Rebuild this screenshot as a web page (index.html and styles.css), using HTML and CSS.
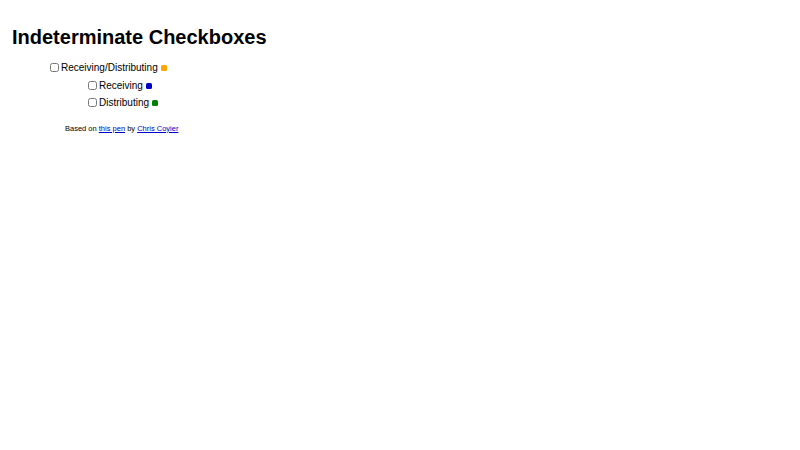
FILE: index.html
```html
<!DOCTYPE html>
<html>
<head>
<meta charset="utf-8">
<link rel="stylesheet" href="styles.css">
</head>
<body>
<h1 class="title">Indeterminate Checkboxes</h1>
<ul class="tree">
  <li>
    <input type="checkbox" id="all"><label for="all">Receiving/Distributing <span class="dot orange"></span></label>
    <ul class="tree sub">
      <li><input type="checkbox" id="rec"><label for="rec">Receiving <span class="dot blue"></span></label></li>
      <li><input type="checkbox" id="dis"><label for="dis">Distributing <span class="dot green"></span></label></li>
    </ul>
  </li>
</ul>
<p class="credit">Based on <a href="#">this pen</a> by <a href="#">Chris Coyier</a></p>
</body>
</html>
```
FILE: styles.css
```css
body {
  margin: 0;
  padding: 12px;
  font-family: "Liberation Sans", Arial, sans-serif;
  background: #fff;
  color: #000;
}
.title {
  font-size: 20px;
  line-height: 24px;
  font-weight: bold;
  margin: 13px 0 10px 0;
}
.tree {
  list-style: none;
  margin: 0;
  padding: 0 0 0 34px;
  font-size: 10px;
}
.tree li {
  line-height: 17.5px;
}
.sub {
  padding-left: 38px;
}
.tree input {
  width: 9px;
  height: 9px;
  margin: 0 2px 0 4px;
  vertical-align: -1px;
}
.dot {
  display: inline-block;
  width: 6px;
  height: 6px;
  border-radius: 1.5px;
  vertical-align: 0;
}
.orange { background: orange; }
.blue { background: #0000cc; }
.green { background: green; }
.credit {
  font-size: 7.5px;
  line-height: 9px;
  margin: 12px 0 0 53px;
}
.credit a { color: #00c; }
```
